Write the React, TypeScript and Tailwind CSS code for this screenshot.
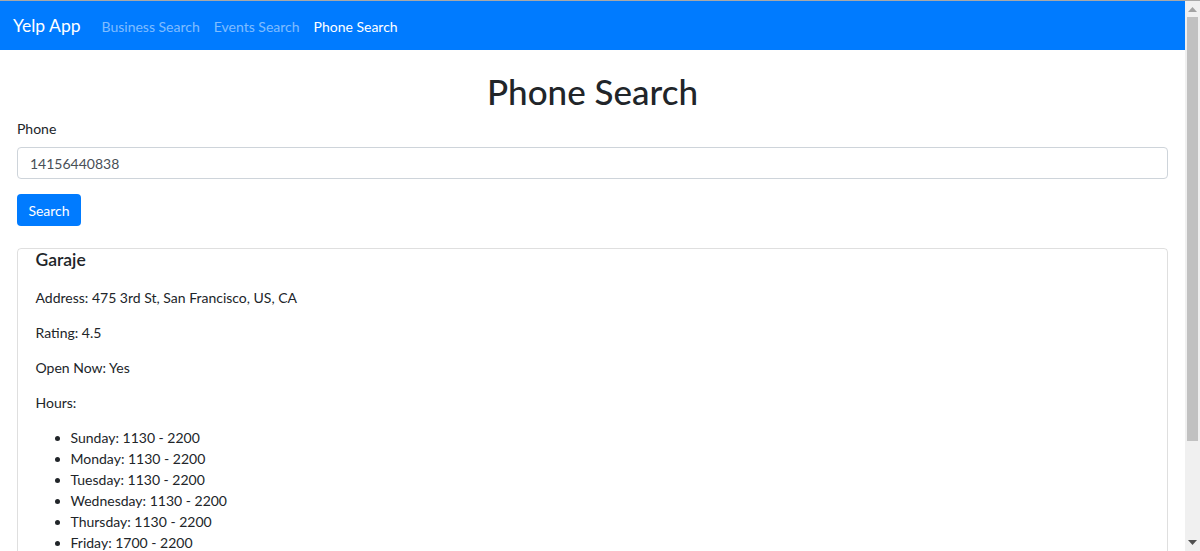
import React from "react";

const hours: [string, string][] = [
  ["Sunday", "1130 - 2200"],
  ["Monday", "1130 - 2200"],
  ["Tuesday", "1130 - 2200"],
  ["Wednesday", "1130 - 2200"],
  ["Thursday", "1130 - 2200"],
  ["Friday", "1700 - 2200"],
  ["Saturday", "1700 - 2200"],
];

function NavBar() {
  return (
    <nav className="flex h-[49px] shrink-0 items-center bg-[#007bff] px-[13px] pt-px">
      <span className="mr-[14px] text-[17.5px] leading-none text-white">Yelp App</span>
      <div className="flex items-center text-[14px]">
        <span className="px-[7px] text-white/50">Business Search</span>
        <span className="px-[7px] text-white/50">Events Search</span>
        <span className="px-[7px] text-white">Phone Search</span>
      </div>
    </nav>
  );
}

function ScrollBar() {
  return (
    <div className="flex w-[15px] shrink-0 flex-col items-center bg-[#f0f0f0]">
      <div className="flex h-[16px] w-full items-center justify-center">
        <svg width="9" height="5" viewBox="0 0 9 5">
          <path d="M4.5 0 L9 5 L0 5 Z" fill="#a3a3a3" />
        </svg>
      </div>
      <div className="h-[424px] w-[11px] bg-[#c1c1c1]" />
      <div className="flex-1" />
      <div className="flex h-[16px] w-full items-center justify-center pb-[2px]">
        <svg width="9" height="5" viewBox="0 0 9 5">
          <path d="M0 0 L9 0 L4.5 5 Z" fill="#505050" />
        </svg>
      </div>
    </div>
  );
}

export default function App() {
  return (
    <div
      className="flex h-[551px] w-[1200px] flex-col overflow-hidden bg-white text-[#212529]"
      style={{ fontFamily: "Lato, 'Noto Sans', sans-serif" }}
    >
      <div className="h-px shrink-0 bg-[#a8a8a8]" />
      <div className="flex min-h-0 flex-1">
        <div className="flex min-w-0 flex-1 flex-col overflow-hidden">
          <NavBar />
          <main className="px-[17px]">
            <h1 className="mt-[20px] mb-[6px] text-center text-[35px] font-medium leading-[42px]">
              Phone Search
            </h1>
            <label className="block text-[14px] leading-[21px]">Phone</label>
            <div className="mt-[8px] flex h-[32px] items-center rounded-[4px] border border-[#ced4da] px-[12px] text-[14px] text-[#495057]">
              14156440838
            </div>
            <button className="mt-[15px] flex h-[32px] w-[64px] items-center justify-center rounded-[4px] bg-[#007bff] text-[14px] text-white">
              Search
            </button>
            <div className="mt-[22px] rounded-[4px] border border-black/[0.125] px-[17.5px] text-[14px] leading-[21px]">
              <h5 className="text-[17.5px] font-semibold leading-[21px]">Garaje</h5>
              <p className="mt-[17px]">Address: 475 3rd St, San Francisco, US, CA</p>
              <p className="mt-[14px]">Rating: 4.5</p>
              <p className="mt-[14px]">Open Now: Yes</p>
              <p className="mt-[14px]">Hours:</p>
              <ul className="mt-[14px] list-disc pl-[35px]">
                {hours.map(([d, h]) => (
                  <li key={d}>
                    {d}: {h}
                  </li>
                ))}
              </ul>
            </div>
          </main>
        </div>
        <ScrollBar />
      </div>
    </div>
  );
}
